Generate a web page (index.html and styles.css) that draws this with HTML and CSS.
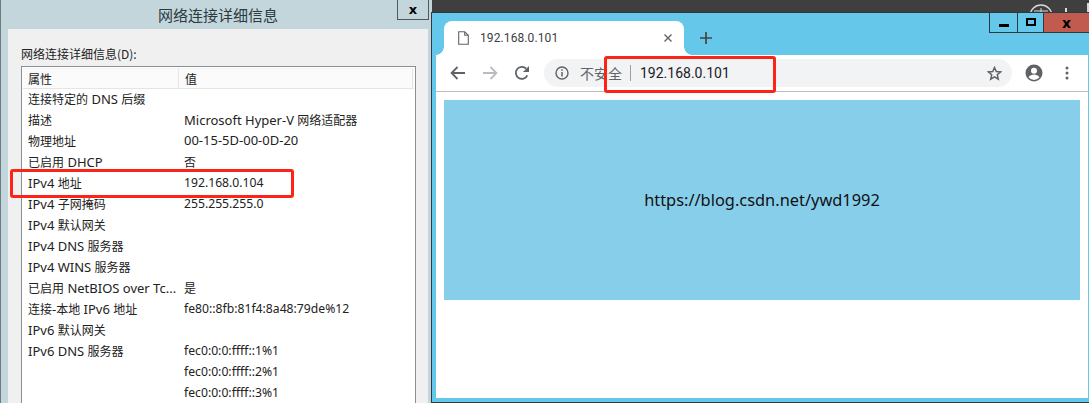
FILE: index.html
```html
<!DOCTYPE html>
<html lang="zh">
<head>
<meta charset="utf-8">
<title>网络连接详细信息</title>
<link rel="stylesheet" href="styles.css">
</head>
<body>
<div class="desk">
  <div class="topbar">
    <svg class="tray" width="60" height="13" viewBox="0 0 60 13"><circle cx="12" cy="16" r="11" fill="none" stroke="#d8d8d8" stroke-width="1.5"/><path d="M12 8v5M5 11h14" stroke="#d8d8d8" stroke-width="1"/><path d="M37 8v5" stroke="#d8d8d8" stroke-width="2"/><path d="M58 3h2v10h-2z" fill="#d8d8d8"/></svg>
  </div>

  <section class="dialog">
    <header class="dlg-title">
      <h1>网络连接详细信息</h1>
      <button class="dlg-close">x</button>
    </header>
    <div class="dlg-panel">
      <div class="dlg-label">网络连接详细信息(D):</div>
      <div class="listbox">
        <div class="list-head"><span class="hcell hcell-a">属性</span><span class="hcell hcell-b">值</span></div>
        <div class="row"><span class="k"><b class="zh">连接特定的</b> DNS <b class="zh">后缀</b></span><span class="v"></span></div>
        <div class="row"><span class="k"><b class="zh">描述</b></span><span class="v">Microsoft Hyper-V <b class="zh">网络适配器</b></span></div>
        <div class="row"><span class="k"><b class="zh">物理地址</b></span><span class="v">00-15-5D-00-0D-20</span></div>
        <div class="row"><span class="k"><b class="zh">已启用</b> DHCP</span><span class="v"><b class="zh">否</b></span></div>
        <div class="row"><span class="k">IPv4 <b class="zh">地址</b></span><span class="v num">192.168.0.104</span></div>
        <div class="row"><span class="k">IPv4 <b class="zh">子网掩码</b></span><span class="v num">255.255.255.0</span></div>
        <div class="row"><span class="k">IPv4 <b class="zh">默认网关</b></span><span class="v"></span></div>
        <div class="row"><span class="k">IPv4 DNS <b class="zh">服务器</b></span><span class="v"></span></div>
        <div class="row"><span class="k">IPv4 WINS <b class="zh">服务器</b></span><span class="v"></span></div>
        <div class="row"><span class="k"><b class="zh">已启用</b> NetBIOS over Tc...</span><span class="v"><b class="zh">是</b></span></div>
        <div class="row"><span class="k"><b class="zh">连接</b>-<b class="zh">本地</b> IPv6 <b class="zh">地址</b></span><span class="v num">fe80::8fb:81f4:8a48:79de%12</span></div>
        <div class="row"><span class="k">IPv6 <b class="zh">默认网关</b></span><span class="v"></span></div>
        <div class="row"><span class="k">IPv6 DNS <b class="zh">服务器</b></span><span class="v num">fec0:0:0:ffff::1%1</span></div>
        <div class="row"><span class="k"></span><span class="v num">fec0:0:0:ffff::2%1</span></div>
        <div class="row"><span class="k"></span><span class="v num">fec0:0:0:ffff::3%1</span></div>
      </div>
    </div>
  </section>

  <section class="browser">
    <div class="winbtns">
      <span class="wb wb-min"><i class="min-glyph"></i></span>
      <span class="wb wb-max"><i class="max-glyph"></i></span>
      <span class="wb wb-close">x</span>
    </div>
    <div class="frame">
      <div class="tabstrip">
        <div class="tab">
          <svg class="ic-doc" width="11" height="14" viewBox="0 0 11 14"><path d="M.7.7h6l3.6 3.6v9H.7z M6.7.7v3.6h3.6" fill="none" stroke="#5f6368" stroke-width="1.1"/></svg>
          <span class="tab-title">192.168.0.101</span>
          <svg class="ic-x" width="10" height="10" viewBox="0 0 10 10"><path d="M1.5 1.5l7 7M8.5 1.5l-7 7" stroke="#5f6368" stroke-width="1.4"/></svg>
        </div>
        <svg class="ic-plus" width="12" height="12" viewBox="0 0 12 12"><path d="M6 0v12M0 6h12" stroke="#444" stroke-width="1.7"/></svg>
      </div>
      <div class="toolbar">
        <svg class="nav nav-back" width="16" height="14" viewBox="0 0 16 14"><path d="M15 7H2M7.5 1 1.6 7l5.900 6" fill="none" stroke="#5f6368" stroke-width="1.8"/></svg>
        <svg class="nav nav-fwd" width="16" height="14" viewBox="0 0 16 14"><path d="M1 7h13M8.500 1l5.900 6-5.900 6" fill="none" stroke="#b9bcc0" stroke-width="1.800"/></svg>
        <svg class="nav nav-reload" width="16" height="16" viewBox="0 0 16 16"><path d="M13.300 10.300A6 6 0 1 1 12.200 3.700" fill="none" stroke="#5f6368" stroke-width="1.800"/><path d="M15 1v6H9z" fill="#5f6368"/></svg>
        <div class="omnibox">
          <svg class="ic-info" width="14" height="14" viewBox="0 0 14 14"><circle cx="7" cy="7" r="6" fill="none" stroke="#5f6368" stroke-width="1.400"/><path d="M7 6v4.500M7 3.300v1.500" stroke="#5f6368" stroke-width="1.500"/></svg>
          <span class="insecure">不安全</span>
          <span class="divider"></span>
          <span class="url">192.168.0.101</span>
          <svg class="ic-star" width="15" height="15" viewBox="0 0 15 15"><path d="M7.500 1.500l1.800 4 4.300.4-3.300 2.900 1 4.300-3.800-2.300-3.800 2.300 1-4.300L1.400 5.900l4.300-.4z" fill="none" stroke="#5f6368" stroke-width="1.500"/></svg>
        </div>
        <svg class="ic-avatar" width="18" height="18" viewBox="0 0 18 18"><circle cx="9" cy="9" r="8.500" fill="#5f6368"/><circle cx="9" cy="6.700" r="3" fill="#fff"/><path d="M3.500 13.300c1.200-2 3.400-2.800 5.500-2.800s4.300.8 5.500 2.800a7 7 0 0 1-11 0z" fill="#fff"/></svg>
        <svg class="ic-menu" width="4" height="14" viewBox="0 0 4 14"><circle cx="2" cy="2" r="1.500" fill="#5f6368"/><circle cx="2" cy="7" r="1.500" fill="#5f6368"/><circle cx="2" cy="12" r="1.500" fill="#5f6368"/></svg>
      </div>
      <main class="page">
        <div class="hero">https://blog.csdn.net/ywd1992</div>
      </main>
    </div>
  </section>

  <div class="mark mark-left"></div>
  <div class="mark mark-right"></div>
</div>
</body>
</html>
```

FILE: styles.css
```css
* { box-sizing: border-box; }
html, body { margin: 0; padding: 0; background: #fff; }
.desk {
  position: relative;
  width: 1089px;
  height: 403px;
  overflow: hidden;
  background: #3f3f3f;
  font-family: "Noto Sans", "Noto Sans CJK SC", sans-serif;
}
.topbar { height: 13px; position: relative; background: #3f3f3f; }
.tray { position: absolute; left: 1029px; top: 0; }

.dialog {
  position: absolute;
  left: 0; top: 0;
  width: 432px;
  height: 403px;
  background: #c3d6dc;
  border-left: 1px solid #6f7b80;
  display: flex;
  flex-direction: column;
}
.dlg-title { height: 29px; position: relative; text-align: center; }
.dlg-title h1 {
  margin: 0;
  font: 400 15px/29px "Noto Sans CJK SC", sans-serif;
  color: #2b3a3f;
  padding-left: 3px;
}
.dlg-close {
  position: absolute;
  left: 396px; top: 0;
  width: 32px; height: 20px;
  padding: 0;
  background: #c3d6dc;
  border: 1px solid #50585c;
  border-top: 0;
  font: 700 13px/16px "DejaVu Sans", sans-serif;
  color: #000;
}
.dlg-panel {
  flex: 1;
  margin-left: 7px;
  margin-right: 4px;
  background: #f0f0f0;
  padding: 0 12px 0 13px;
}
.dlg-label {
  height: 37px;
  padding-top: 16px;
  font: 400 12px/18px "Noto Sans CJK SC", sans-serif;
  color: #222;
}
.listbox {
  background: #fff;
  border: 1px solid #8a8f94;
  border-bottom: 0;
  height: 340px;
  padding: 1px 1px 0 1px;
  font-size: 13px;
  color: #222;
}
.zh { font: 400 12px/19px "Noto Sans CJK SC", sans-serif; }
.num { font-size: 12.2px; }
.list-head {
  display: flex;
  height: 21px;
  border-top: 1px solid #f4f4f4;
  border-bottom: 1px solid #e5e5e5;
  background: #fbfbfb;
  font: 400 12px/19px "Noto Sans CJK SC", sans-serif;
}
.hcell { display: block; padding-left: 5px; }
.hcell-a { width: 156px; border-right: 1px solid #e5e5e5; }
.hcell-b { flex: 1; border-right: 1px solid #e5e5e5; margin-left: 1px; margin-right: 1px; }
.row { display: flex; height: 21px; line-height: 19px; white-space: nowrap; }
.k { display: block; width: 161px; padding-left: 5px; overflow: hidden; }
.v { display: block; flex: 1; }

.browser {
  position: absolute;
  left: 431px; top: 12px;
  width: 658px;
  height: 391px;
  background: #65c8ea;
  border-top: 1px solid #2d3a40;
  border-left: 1px solid #2d3a40;
}
.frame {
  position: absolute;
  left: 4px; top: 8px;
  width: 652px;
  height: 377px;
  display: flex;
  flex-direction: column;
}
.desk::after {
  content: "";
  position: absolute;
  left: 432px; right: 0; bottom: 0;
  height: 1px;
  background: #2d3a40;
}
.winbtns {
  position: absolute;
  right: 0; top: -1px;
  height: 21px;
  display: flex;
  z-index: 2;
}
.wb { display: flex; align-items: center; justify-content: center; height: 21px; border-bottom: 1px solid #2d3a40; border-left: 1px solid #2d3a40; border-top: 1px solid #2d3a40; }
.wb-min { width: 28px; }
.wb-max { width: 26px; }
.wb-close { width: 46px; background: #c15b50; font: 700 14px/18px "DejaVu Sans", sans-serif; color: #000; }
.min-glyph { width: 10px; height: 3px; background: #000; margin-top: 5px; }
.max-glyph { width: 10px; height: 8px; border: 2px solid #000; margin-top: -2px; }

.tabstrip { height: 34px; flex: none; display: flex; align-items: flex-end; padding-left: 8px; position: relative; }
.tab {
  position: relative;
  width: 240px; height: 34px;
  background: #fff;
  border-radius: 8px 8px 0 0;
  display: flex;
  align-items: center;
  padding: 0 11px 0 14px;
}
.tab::before, .tab::after {
  content: "";
  position: absolute;
  bottom: 0;
  width: 8px; height: 8px;
}
.tab::before { left: -8px; background: radial-gradient(circle at 0 0, transparent 7.5px, #fff 8px); }
.tab::after { right: -8px; background: radial-gradient(circle at 100% 0, transparent 7.5px, #fff 8px); }
.ic-doc { margin-right: 11px; flex: none; }
.tab-title { flex: 1; font: 400 12px/16px "Roboto", sans-serif; color: #3c4043; letter-spacing: .1px; }
.ic-plus { margin: 0 0 11px 16px; }
.toolbar {
  height: 37px;
  flex: none;
  background: #fff;
  border-bottom: 1px solid #bdbdbd;
  display: flex;
  align-items: center;
  padding-left: 14px;
}
.nav { flex: none; }
.nav-fwd { margin-left: 16px; }
.nav-reload { margin-left: 16px; }
.omnibox {
  flex: none;
  width: 468px;
  height: 28px;
  margin-left: 14px;
  background: #f1f3f4;
  border-radius: 14px;
  display: flex;
  align-items: center;
  padding: 0 10px 0 11px;
}
.ic-info { margin-right: 11px; flex: none; }
.insecure { font: 400 14px/16px "Noto Sans CJK SC", sans-serif; color: #5f6368; }
.divider { width: 1px; height: 16px; background: #9aa0a6; margin: 0 9px 0 8px; }
.url { flex: 1; font: 400 14px/18px "Roboto", sans-serif; color: #202124; }
.ic-avatar { margin-left: 13px; flex: none; }
.ic-menu { margin-left: 22px; flex: none; }
.page { flex: 1; background: #fff; padding: 8px; }
.hero {
  height: 200px;
  background: #87ceeb;
  display: flex;
  align-items: center;
  justify-content: center;
  font: 400 16.4px/20px "Noto Sans", sans-serif;
  color: #111;
}

.mark { position: absolute; border: 3px solid #fb2416; border-radius: 3px; }
.mark-left { left: 10px; top: 169px; width: 284px; height: 29px; }
.mark-right { left: 604px; top: 56px; width: 172px; height: 37px; }
```
